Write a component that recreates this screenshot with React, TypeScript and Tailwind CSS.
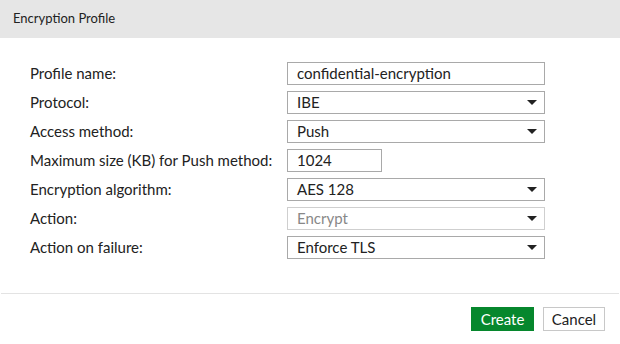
import React from 'react';

type Field = {
  label: string;
  value: string;
  kind: 'text' | 'select';
  width?: string;
  disabled?: boolean;
};

const fields: Field[] = [
  { label: 'Profile name:', value: 'confidential-encryption', kind: 'text' },
  { label: 'Protocol:', value: 'IBE', kind: 'select' },
  { label: 'Access method:', value: 'Push', kind: 'select' },
  { label: 'Maximum size (KB) for Push method:', value: '1024', kind: 'text', width: 'w-[95px]' },
  { label: 'Encryption algorithm:', value: 'AES 128', kind: 'select' },
  { label: 'Action:', value: 'Encrypt', kind: 'select', disabled: true },
  { label: 'Action on failure:', value: 'Enforce TLS', kind: 'select' },
];

const Caret = () => (
  <svg width="10" height="5" viewBox="0 0 10 5" className="shrink-0">
    <path d="M0 0 H10 L5 5 Z" fill="#222" />
  </svg>
);

const App: React.FC = () => {
  return (
    <div className="w-[620px] h-[344px] bg-white text-[#222] font-['Lato',sans-serif] overflow-hidden">
      <div className="h-[38px] bg-[#e6e6e6] flex items-center px-[13px] text-[13px]">
        Encryption Profile
      </div>

      <div className="pt-[24px] pl-[30px] flex flex-col gap-[6px]">
        {fields.map((f) => (
          <div key={f.label} className="flex items-center h-[23px]">
            <div className="w-[257px] text-[15px]">{f.label}</div>
            <div
              className={`${f.width ?? 'w-[258px]'} h-[23px] border ${
                f.disabled ? 'border-[#cfcfcf] text-[#888]' : 'border-[#a9a9a9]'
              } flex items-center justify-between pl-[9px] pr-[7px] text-[15px]`}
            >
              <span>{f.value}</span>
              {f.kind === 'select' && <Caret />}
            </div>
          </div>
        ))}
      </div>

      <div className="mt-[34px] mx-[1px] border-t border-[#e3e3e3]" />

      <div className="flex justify-end gap-[9px] pt-[13px] pr-[15px]">
        <button className="w-[63px] h-[24px] bg-[#06872d] text-white text-[15px] flex items-center justify-center">
          Create
        </button>
        <button className="w-[62px] h-[24px] bg-white border border-[#c8c8c8] text-[#222] text-[15px] flex items-center justify-center">
          Cancel
        </button>
      </div>
    </div>
  );
};

export default App;
